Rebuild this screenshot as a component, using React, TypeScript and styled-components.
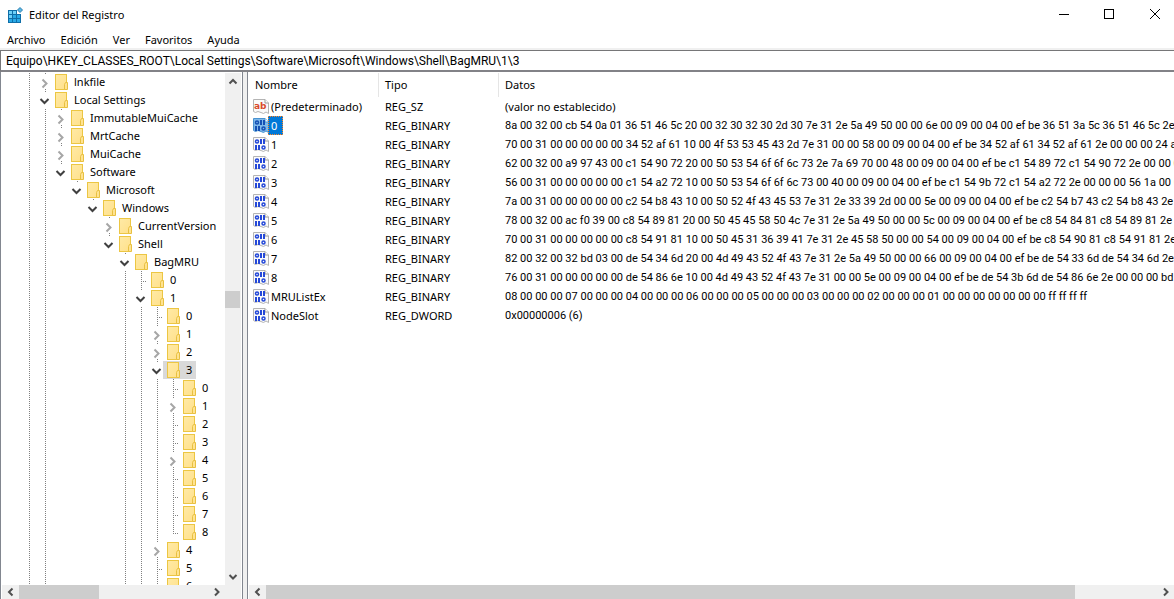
import React from 'react';
import styled, { createGlobalStyle, css } from 'styled-components';

const GlobalStyle = createGlobalStyle`
  * { box-sizing: border-box; }
  body {
    margin: 0;
    background: #fff;
    color: #000;
    font: 11px/18px "Noto Sans", "Open Sans", sans-serif;
    overflow: hidden;
  }
  button, input {
    font: inherit;
    color: inherit;
    background: none;
    border: 0;
    border-radius: 0;
    padding: 0;
    margin: 0;
    outline: none;
  }
`;

const Window = styled.div`
  display: flex;
  flex-direction: column;
  height: 100vh;
  overflow: hidden;
`;

const TitleBar = styled.header`
  display: flex;
  align-items: center;
  flex: none;
  height: 30px;
  padding-left: 7px;
  overflow: hidden;
`;

const Title = styled.h1`
  flex: 1;
  margin: 0 0 0 6px;
  font-size: 11px;
  font-weight: 400;
`;

const WindowControls = styled.div`
  display: flex;
  margin-right: -4px;
`;

const WindowButton = styled.button`
  display: grid;
  place-items: center;
  width: 46px;
  height: 28px;
`;

const MenuBar = styled.nav`
  display: flex;
  flex: none;
  gap: 15px;
  height: 20px;
  padding-left: 7px;
  border-bottom: 2px solid #f0f0f0;
  line-height: 20px;
`;

const MenuItem = styled.button`
  white-space: nowrap;
`;

const AddressBar = styled.div`
  display: flex;
  flex: none;
  height: 22px;
  border: 1px solid #767678;
  border-right: 0;
  border-bottom: 2px solid #828287;
`;

const AddressInput = styled.input`
  flex: 1;
  min-width: 0;
  padding-left: 5px;
  font-family: Roboto, "Open Sans", sans-serif;
  font-size: 12px;
`;

const Panels = styled.main`
  display: flex;
  flex: 1;
  min-height: 0;
`;

const TreePanel = styled.section`
  display: flex;
  flex-direction: column;
  flex: none;
  width: 243px;
  padding: 1px 1px 0;
  border: solid #828790;
  border-width: 0 1px;
`;

const Splitter = styled.div`
  flex: none;
  width: 4px;
  background: #f0f0f0;
`;

const ListPanel = styled.section`
  display: flex;
  flex-direction: column;
  flex: 1;
  min-width: 0;
  padding: 1px 0 0 0;
  border-left: 1px solid #828790;
`;

const TreeArea = styled.div`
  display: flex;
  flex: 1;
  min-height: 0;
`;

const Tree = styled.ul`
  flex: 1;
  min-width: 0;
  margin: 0;
  padding: 0 0 0 19px;
  overflow: hidden;
  list-style: none;
`;

const TreeRow = styled.li`
  display: flex;
  height: 18px;
`;

const dots = '#808080 0 1px, transparent 1px 2px';

const Guide = styled.span<{ $line: boolean }>`
  flex: none;
  width: 16px;
  background: ${p => (p.$line ? `repeating-linear-gradient(${dots}) 8px 0 / 1px 18px no-repeat` : 'none')};
`;

const Branch = styled.span`
  flex: none;
  width: 14px;
  height: 18px;
`;

const Key = styled.span<{ $selected?: boolean }>`
  display: flex;
  align-items: center;
  padding: 0 4px;
  white-space: nowrap;
  background: ${p => (p.$selected ? '#d9d9d9' : 'transparent')};
`;

const KeyName = styled.span`
  margin-left: 5px;
`;

const VScroll = styled.div`
  display: flex;
  flex-direction: column;
  flex: none;
  width: 16px;
  background: #f0f0f0;
`;

const HScroll = styled.div<{ $inset?: boolean }>`
  display: flex;
  flex: none;
  height: 14px;
  padding-right: ${p => (p.$inset ? '16px' : '0')};
  margin-left: ${p => (p.$inset ? '0' : '1px')};
  background: #f0f0f0;
`;

const ScrollButton = styled.button<{ $vertical?: boolean }>`
  display: grid;
  place-items: center;
  flex: none;
  ${p => (p.$vertical
    ? css`width: 15px; height: 17px;`
    : css`width: 17px; height: 14px;`)}
`;

const Track = styled.div<{ $vertical?: boolean; $before: number; $thumb: number; $after: number }>`
  display: grid;
  flex: 1;
  ${p => (p.$vertical
    ? css`grid-template-rows: ${p.$before}fr ${p.$thumb}fr ${p.$after}fr;`
    : css`grid-template-columns: ${p.$before}fr ${p.$thumb}fr ${p.$after}fr;`)}
`;

const Thumb = styled.div<{ $vertical?: boolean }>`
  ${p => (p.$vertical ? 'grid-row: 2; width: 15px;' : 'grid-column: 2;')}
  background: #cdcdcd;
`;

const TableArea = styled.div`
  flex: 1;
  min-height: 0;
  overflow: hidden;
`;

const Table = styled.table`
  width: 100%;
  border-collapse: separate;
  border-spacing: 0;
  table-layout: fixed;
`;

const HeadCell = styled.th<{ $width?: number }>`
  width: ${p => (p.$width ? `${p.$width}px` : 'auto')};
  height: 24px;
  padding: 0 0 0 6px;
  border-right: ${p => (p.$width ? '1px solid #e5e5e5' : '0')};
  text-align: left;
  font-weight: 400;
  &:first-child { padding-left: 7px; }
`;

const Cell = styled.td`
  height: 19px;
  padding: 0 0 0 6px;
  line-height: 19px;
  white-space: nowrap;
  overflow: hidden;
  &:first-child { padding-left: 5px; }
`;

const DataCell = styled(Cell)<{ $numeric: boolean }>`
  ${p => p.$numeric && 'font-family: Roboto, "Open Sans", sans-serif;'}
`;

const ValueBox = styled.span`
  display: flex;
  align-items: center;
  height: 19px;
`;

const ValueName = styled.span<{ $selected?: boolean }>`
  height: 19px;
  padding: 0 5px 0 2px;
  border: 1px solid transparent;
  margin-left: -1px;
  line-height: 17px;
  ${p => p.$selected && css`
    color: #fff;
    background: #0078d7;
    border: 1px dotted #ff8728;
  `}
`;

function AppIcon() {
  return (
    <svg width="16" height="17" viewBox="0 0 16 17" aria-hidden="true">
      <rect x="1" y="3" width="13" height="13" fill="#0f6ea8" />
      <path d="M2 4h3v3H2zM6 4h3v3H6zM2 8h3v3H2z" fill="#6fd0f7" />
      <path d="M6 8h3v3H6zM10 8h3v3h-3zM2 12h3v3H2zM6 12h3v3H6zM10 12h3v3h-3z" fill="#29a9e6" />
      <path d="M10 0h6v7h-6z" fill="#fff" />
      <path d="M13 0.5l2.5 2.5-2.5 2.5-2.5-2.5z" fill="#5cb8e4" stroke="#2a7fb0" />
    </svg>
  );
}

function Folder() {
  return (
    <svg width="14" height="18" viewBox="0 0 14 18" aria-hidden="true">
      <defs>
        <linearGradient id="folderFill" x1="0" y1="0" x2="1" y2="1">
          <stop offset="0" stopColor="#ffeaa6" />
          <stop offset="1" stopColor="#ffe08a" />
        </linearGradient>
      </defs>
      <rect x="0.5" y="1.5" width="11" height="15" fill="url(#folderFill)" stroke="#ecc643" />
      <path d="M9.5 16.5V11.5L10.5 9.5H12.5V16.5Z" fill="#ffe391" stroke="#e8c041" />
    </svg>
  );
}

type Kind = 'open' | 'closed' | 'leaf' | 'last';

function BranchMark({ kind }: { kind: Kind }) {
  const line = { stroke: '#808080', strokeWidth: 1, strokeDasharray: '1 1' };
  return (
    <Branch>
      <svg width="14" height="18" viewBox="0 0 14 18" aria-hidden="true">
        {(kind === 'leaf' || kind === 'last') && (
          <>
            <path d={kind === 'leaf' ? 'M8.5 0V18' : 'M8.5 0V10'} {...line} />
            <path d="M8 10.5H14" {...line} />
          </>
        )}
        {kind === 'open' && (
          <>
            <path d="M8.5 0V2" {...line} />
            <path d="M3.5 8L7.5 12L11.5 8" fill="none" stroke="#404040" strokeWidth="2" />
          </>
        )}
        {kind === 'closed' && (
          <>
            <path d="M8.5 0V2M8.5 16V18" {...line} />
            <path d="M5.5 6.5L9.5 10.5L5.5 14.5" fill="none" stroke="#a6a6a6" strokeWidth="2" />
          </>
        )}
      </svg>
    </Branch>
  );
}

const arrows = {
  up: 'M1.5 6.5L5 3L8.5 6.5',
  down: 'M1.5 3L5 6.5L8.5 3',
  left: 'M6.5 1.5L3 5L6.5 8.5',
  right: 'M3 1.5L6.5 5L3 8.5',
};

function Arrow({ to }: { to: keyof typeof arrows }) {
  return (
    <svg width="10" height="10" viewBox="0 0 10 10" aria-hidden="true">
      <path d={arrows[to]} fill="none" stroke="#505050" strokeWidth="2" />
    </svg>
  );
}

function ValueIcon({ text, selected }: { text?: boolean; selected?: boolean }) {
  const ink = selected ? '#1450b4' : '#2448d8';
  return (
    <svg width="16" height="17" viewBox="0 0 16 17" aria-hidden="true">
      <path
        d="M0.5 1.5H12L15.5 5V15.5L13 14L10.5 15.5L8 14.5L5 13.5L2.5 14.5L0.5 13.5Z"
        fill={selected ? '#7fb9ea' : '#fafafa'}
        stroke={selected ? '#4a93d0' : '#b4b4b4'}
      />
      <path d="M12 1.5V5H15.5" fill="#fff" stroke={selected ? '#4a93d0' : '#9a9a9a'} />
      {text ? (
        <text x="1" y="11" fontFamily="DejaVu Sans" fontWeight="700" fontSize="9" fill="#d8492b">ab</text>
      ) : (
        <g fill={ink}>
          <ellipse cx="4" cy="5.5" rx="1.5" ry="1.5" fill="none" stroke={ink} strokeWidth="1.5" />
          <rect x="7" y="3" width="2" height="5" />
          <rect x="10" y="3" width="2" height="5" />
          <rect x="2" y="9" width="2" height="5" />
          <rect x="5" y="9" width="2" height="5" />
          <ellipse cx="10.5" cy="11.5" rx="1.5" ry="1.5" fill="none" stroke={ink} strokeWidth="1.5" />
        </g>
      )}
    </svg>
  );
}

type Node = { name: string; guides: string; kind: Kind; selected?: boolean };

// Each character of `guides` is one indent column: "|" carries an ancestor line, "." is blank.
const nodes: Node[] = [
  { name: 'lnkfile', guides: '|', kind: 'closed' },
  { name: 'Local Settings', guides: '|', kind: 'open' },
  { name: 'ImmutableMuiCache', guides: '||', kind: 'closed' },
  { name: 'MrtCache', guides: '||', kind: 'closed' },
  { name: 'MuiCache', guides: '||', kind: 'closed' },
  { name: 'Software', guides: '||', kind: 'open' },
  { name: 'Microsoft', guides: '||.', kind: 'open' },
  { name: 'Windows', guides: '||..', kind: 'open' },
  { name: 'CurrentVersion', guides: '||...', kind: 'closed' },
  { name: 'Shell', guides: '||...', kind: 'open' },
  { name: 'BagMRU', guides: '||....', kind: 'open' },
  { name: '0', guides: '||....|', kind: 'leaf' },
  { name: '1', guides: '||....|', kind: 'open' },
  { name: '0', guides: '||....||', kind: 'leaf' },
  { name: '1', guides: '||....||', kind: 'closed' },
  { name: '2', guides: '||....||', kind: 'closed' },
  { name: '3', guides: '||....||', kind: 'open', selected: true },
  { name: '0', guides: '||....|||', kind: 'leaf' },
  { name: '1', guides: '||....|||', kind: 'closed' },
  { name: '2', guides: '||....|||', kind: 'leaf' },
  { name: '3', guides: '||....|||', kind: 'leaf' },
  { name: '4', guides: '||....|||', kind: 'closed' },
  { name: '5', guides: '||....|||', kind: 'leaf' },
  { name: '6', guides: '||....|||', kind: 'leaf' },
  { name: '7', guides: '||....|||', kind: 'leaf' },
  { name: '8', guides: '||....|||', kind: 'last' },
  { name: '4', guides: '||....||', kind: 'closed' },
  { name: '5', guides: '||....||', kind: 'leaf' },
  { name: '6', guides: '||....||', kind: 'leaf' },
];

const values: [string, string, string][] = [
  ['(Predeterminado)', 'REG_SZ', '(valor no establecido)'],
  ['0', 'REG_BINARY', '8a 00 32 00 cb 54 0a 01 36 51 46 5c 20 00 32 30 32 30 2d 30 7e 31 2e 5a 49 50 00 00 6e 00 09 00 04 00 ef be 36 51 3a 5c 36 51 46 5c 2e 00 00 00'],
  ['1', 'REG_BINARY', '70 00 31 00 00 00 00 00 34 52 af 61 10 00 4f 53 53 45 43 2d 7e 31 00 00 58 00 09 00 04 00 ef be 34 52 af 61 34 52 af 61 2e 00 00 00 24 a1 00 00'],
  ['2', 'REG_BINARY', '62 00 32 00 a9 97 43 00 c1 54 90 72 20 00 50 53 54 6f 6f 6c 73 2e 7a 69 70 00 48 00 09 00 04 00 ef be c1 54 89 72 c1 54 90 72 2e 00 00 00'],
  ['3', 'REG_BINARY', '56 00 31 00 00 00 00 00 c1 54 a2 72 10 00 50 53 54 6f 6f 6c 73 00 40 00 09 00 04 00 ef be c1 54 9b 72 c1 54 a2 72 2e 00 00 00 56 1a 00 00'],
  ['4', 'REG_BINARY', '7a 00 31 00 00 00 00 00 c2 54 b8 43 10 00 50 52 4f 43 45 53 7e 31 2e 33 39 2d 00 00 5e 00 09 00 04 00 ef be c2 54 b7 43 c2 54 b8 43 2e 00 00 00'],
  ['5', 'REG_BINARY', '78 00 32 00 ac f0 39 00 c8 54 89 81 20 00 50 45 45 58 50 4c 7e 31 2e 5a 49 50 00 00 5c 00 09 00 04 00 ef be c8 54 84 81 c8 54 89 81 2e 00 00 00'],
  ['6', 'REG_BINARY', '70 00 31 00 00 00 00 00 c8 54 91 81 10 00 50 45 31 36 39 41 7e 31 2e 45 58 50 00 00 54 00 09 00 04 00 ef be c8 54 90 81 c8 54 91 81 2e 00 00 00'],
  ['7', 'REG_BINARY', '82 00 32 00 32 bd 03 00 de 54 34 6d 20 00 4d 49 43 52 4f 43 7e 31 2e 5a 49 50 00 00 66 00 09 00 04 00 ef be de 54 33 6d de 54 34 6d 2e 00 00 00'],
  ['8', 'REG_BINARY', '76 00 31 00 00 00 00 00 de 54 86 6e 10 00 4d 49 43 52 4f 43 7e 31 00 00 5e 00 09 00 04 00 ef be de 54 3b 6d de 54 86 6e 2e 00 00 00 bd 00 00'],
  ['MRUListEx', 'REG_BINARY', '08 00 00 00 07 00 00 00 04 00 00 00 06 00 00 00 05 00 00 00 03 00 00 00 02 00 00 00 01 00 00 00 00 00 00 00 ff ff ff ff'],
  ['NodeSlot', 'REG_DWORD', '0x00000006 (6)'],
];

export default function App() {
  return (
    <Window>
      <GlobalStyle />
      <TitleBar>
        <AppIcon />
        <Title>Editor del Registro</Title>
        <WindowControls>
          <WindowButton aria-label="Minimizar">
            <svg width="12" height="12" viewBox="0 0 12 12"><path d="M2 5.5H12" stroke="#000" /></svg>
          </WindowButton>
          <WindowButton aria-label="Maximizar">
            <svg width="12" height="12" viewBox="0 0 12 12"><rect x="1.5" y="0.5" width="9" height="9" fill="none" stroke="#000" /></svg>
          </WindowButton>
          <WindowButton aria-label="Cerrar">
            <svg width="12" height="12" viewBox="0 0 12 12"><path d="M1 0L11 10M11 0L1 10" stroke="#000" /></svg>
          </WindowButton>
        </WindowControls>
      </TitleBar>
      <MenuBar>
        {['Archivo', 'Edición', 'Ver', 'Favoritos', 'Ayuda'].map(m => <MenuItem key={m}>{m}</MenuItem>)}
      </MenuBar>
      <AddressBar>
        <AddressInput
          type="text"
          aria-label="Dirección"
          defaultValue={'Equipo\\HKEY_CLASSES_ROOT\\Local Settings\\Software\\Microsoft\\Windows\\Shell\\BagMRU\\1\\3'}
        />
      </AddressBar>
      <Panels>
        <TreePanel>
          <TreeArea>
            <Tree>
              {nodes.map((n, i) => (
                <TreeRow key={i}>
                  {n.guides.split('').map((g, j) => <Guide key={j} $line={g === '|'} />)}
                  <BranchMark kind={n.kind} />
                  <Key $selected={n.selected}>
                    <Folder />
                    <KeyName>{n.name}</KeyName>
                  </Key>
                </TreeRow>
              ))}
            </Tree>
            <VScroll>
              <ScrollButton $vertical aria-label="Subir"><Arrow to="up" /></ScrollButton>
              <Track $vertical $before={201} $thumb={17} $after={260}><Thumb $vertical /></Track>
              <ScrollButton $vertical aria-label="Bajar"><Arrow to="down" /></ScrollButton>
            </VScroll>
          </TreeArea>
          <HScroll $inset>
            <ScrollButton aria-label="Izquierda"><Arrow to="left" /></ScrollButton>
            <Track $before={0} $thumb={80} $after={109}><Thumb /></Track>
            <ScrollButton aria-label="Derecha"><Arrow to="right" /></ScrollButton>
          </HScroll>
        </TreePanel>
        <Splitter />
        <ListPanel>
          <TableArea>
            <Table>
              <thead>
                <tr>
                  <HeadCell $width={131}>Nombre</HeadCell>
                  <HeadCell $width={120}>Tipo</HeadCell>
                  <HeadCell>Datos</HeadCell>
                </tr>
              </thead>
              <tbody>
                {values.map(([name, type, data]) => (
                  <tr key={name}>
                    <Cell>
                      <ValueBox>
                        <ValueIcon text={type === 'REG_SZ'} selected={name === '0'} />
                        <ValueName $selected={name === '0'}>{name}</ValueName>
                      </ValueBox>
                    </Cell>
                    <Cell>{type}</Cell>
                    <DataCell $numeric={type !== 'REG_SZ'}>{data}</DataCell>
                  </tr>
                ))}
              </tbody>
            </Table>
          </TableArea>
          <HScroll>
            <ScrollButton aria-label="Izquierda"><Arrow to="left" /></ScrollButton>
            <Track $before={0} $thumb={809} $after={82}><Thumb /></Track>
            <ScrollButton aria-label="Derecha"><Arrow to="right" /></ScrollButton>
          </HScroll>
        </ListPanel>
      </Panels>
    </Window>
  );
}
